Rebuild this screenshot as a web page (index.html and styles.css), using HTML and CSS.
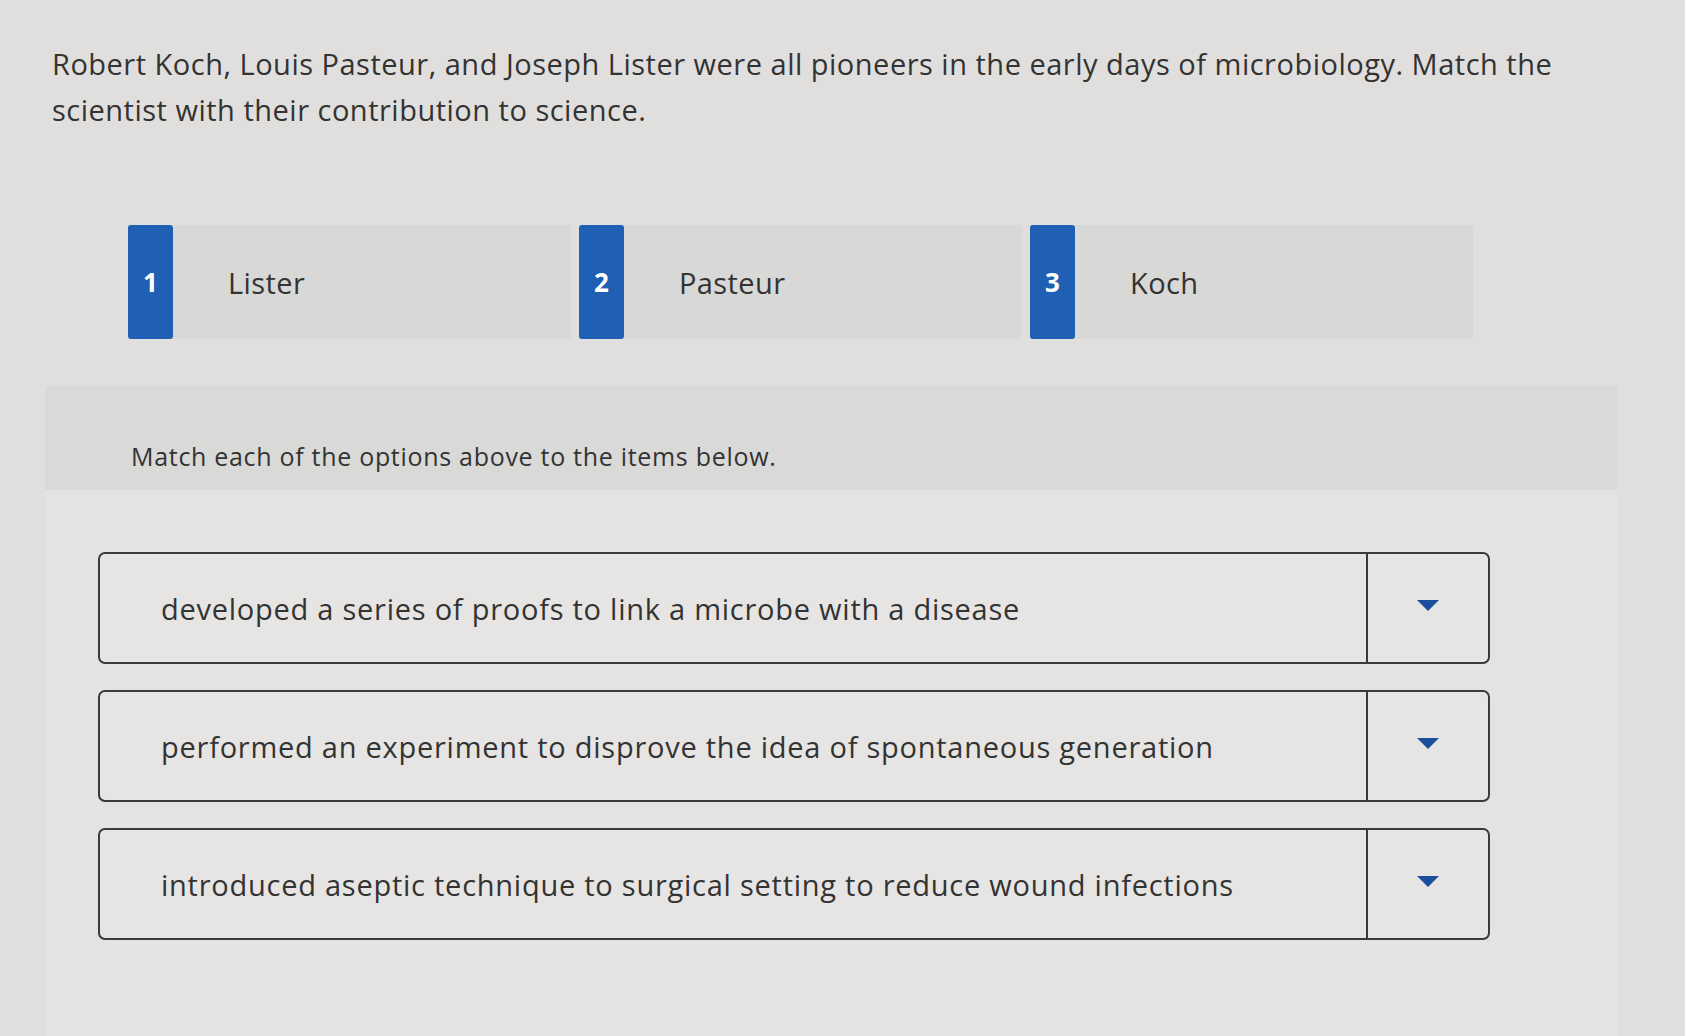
FILE: index.html
```html
<!DOCTYPE html>
<html lang="en">

<head>
    <meta charset="UTF-8">
    <meta name="viewport" content="width=device-width, initial-scale=1.0">
    <title>Matching</title>
    <link rel="stylesheet" href="styles.css">
</head>

<body>
    <p class="question">Robert Koch, Louis Pasteur, and Joseph Lister were all pioneers in the early days of microbiology. Match the scientist with their contribution to science.</p>

    <ul class="options">
        <li><span class="num">1</span><span class="name">Lister</span></li>
        <li><span class="num">2</span><span class="name">Pasteur</span></li>
        <li><span class="num">3</span><span class="name">Koch</span></li>
    </ul>

    <div class="panel">
        <div class="panel-head">Match each of the options above to the items below.</div>
        <div class="panel-body">
            <div class="select">
                <div class="text">developed a series of proofs to link a microbe with a disease</div>
                <div class="arrow"><span></span></div>
            </div>
            <div class="select">
                <div class="text">performed an experiment to disprove the idea of spontaneous generation</div>
                <div class="arrow"><span></span></div>
            </div>
            <div class="select">
                <div class="text">introduced aseptic technique to surgical setting to reduce wound infections</div>
                <div class="arrow"><span></span></div>
            </div>
        </div>
    </div>
</body>

</html>
```

FILE: styles.css
```css
* {
    margin: 0;
    padding: 0;
}

body {
    background-color: #e0dfdd;
    font-family: "Open Sans", Lato, sans-serif;
    color: #333;
}

.question {
    width: 1570px;
    padding: 41px 0 0 52px;
    font-size: 29px;
    letter-spacing: 0.5px;
    line-height: 46px;
}

.options {
    list-style: none;
    display: flex;
    gap: 8px;
    margin-top: 92px;
    padding-left: 128px;
}

.options li {
    width: 443px;
    height: 114px;
    display: flex;
    align-items: center;
    background-color: #d8d8d7;
}

.options .num {
    width: 45px;
    height: 100%;
    display: flex;
    align-items: center;
    justify-content: center;
    background-color: #1f5fb4;
    color: #fff;
    font-weight: bold;
    font-size: 26px;
    border-radius: 3px;
}

.options .name {
    margin-left: 55px;
    font-size: 29px;
    letter-spacing: 0.4px;
}

.panel {
    margin: 47px 0 0 45px;
    width: 1572px;
    background-color: #e4e3e1;
    padding-bottom: 120px;
}

.panel-head {
    height: 104px;
    box-sizing: border-box;
    padding: 54px 0 0 86px;
    font-size: 25px;
    letter-spacing: 0.7px;
    line-height: 32px;
    background-color: #d9d9d8;
}

.panel-body {
    padding: 62px 0 0 53px;
    display: flex;
    flex-direction: column;
    gap: 26px;
}

.select {
    width: 1392px;
    height: 112px;
    box-sizing: border-box;
    display: flex;
    border: 2px solid #3a3a3a;
    border-radius: 7px;
    background-color: #e6e5e3;
}

.select .text {
    flex: 1;
    display: flex;
    align-items: center;
    padding-left: 61px;
    font-size: 29px;
    letter-spacing: 0.75px;
    border-right: 2px solid #3a3a3a;
}

.select .arrow {
    width: 120px;
    display: flex;
    align-items: center;
    justify-content: center;
}

.select .arrow span {
    width: 0;
    height: 0;
    border-left: 11px solid transparent;
    border-right: 11px solid transparent;
    border-top: 11px solid #1b4e9c;
    margin-top: -6px;
}
```
